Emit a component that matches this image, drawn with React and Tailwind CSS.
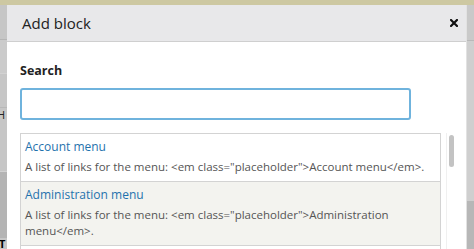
const BLOCKS = [
  {
    title: "Account menu",
    desc: 'A list of links for the menu: <em class="placeholder">Account menu</em>.',
    bg: "bg-white",
  },
  {
    title: "Administration menu",
    desc: 'A list of links for the menu: <em class="placeholder">Administration menu</em>.',
    bg: "bg-[#f3f3ef]",
  },
  {
    title: "Book navigation",
    desc: "Shows the book navigation.",
    bg: "bg-white",
  },
];

export default function App() {
  return (
    <div
      className="w-[474px] h-[249px] overflow-hidden flex flex-col bg-[#c4c4c4] text-[#333]"
      style={{ fontFamily: '"Open Sans", "Liberation Sans", sans-serif' }}
    >
      {/* page behind the overlay */}
      <div className="h-[5px] shrink-0 bg-[#cdc8a2]" />
      <div className="flex flex-1 min-h-0">
        <div className="w-[7px] shrink-0 bg-[#c6c6c6] flex flex-col overflow-hidden">
          <div className="h-[35px] shrink-0 border-b border-[#b5b5b5]" />
          <div className="h-[34px] shrink-0 border-b border-[#d2d2d2] bg-[#cbcbcb]" />
          <div className="h-[34px] shrink-0 border-b border-[#b8b8b8]" />
          <div className="h-[14px] shrink-0 text-[11px] leading-[14px] text-[#222] -ml-[3px]">H</div>
          <div className="h-[50px] shrink-0 border-b border-[#d2d2d2]" />
          <div className="h-[66px] shrink-0 bg-[#b4b4b4]" />
          <div className="text-[11px] leading-[12px] text-black font-bold -ml-[1px]">T</div>
        </div>

        {/* dialog */}
        <div className="flex-1 min-w-0 bg-white flex flex-col">
          <div className="h-[37px] shrink-0 bg-[#e8e8ea] border-b border-[#cfcfcf] flex items-center justify-between pl-[15px] pr-[7px]">
            <span className="text-[15px] text-[#222]">Add block</span>
            <svg width="8" height="8" viewBox="0 0 8 8" className="mr-[1px]">
              <path d="M1 1 L7 7 M7 1 L1 7" stroke="#111" strokeWidth="2.2" strokeLinecap="square" />
            </svg>
          </div>

          <div className="flex-1 min-h-0 pl-[13px] pr-[10px] pt-[20px]">
            <label className="block text-[12.5px] font-bold text-[#222] leading-[18px]">Search</label>
            <input
              className="mt-[8px] block w-[391px] h-[32px] rounded-[3px] border-2 border-[#6fb3dd] outline-none px-2 text-[12px]"
              type="text"
            />

            <div className="mt-[13px] flex gap-[5px]">
              <div className="w-[421px] border border-[#d3d3d3] border-b-0">
                {BLOCKS.map((b) => (
                  <div key={b.title} className={`${b.bg} border-b border-[#d3d3d3] pl-[4px] pr-[4px] pt-[5px] pb-[6px]`}>
                    <div className="text-[12px] leading-[16px] text-[#1f72ad] mb-[4px]">{b.title}</div>
                    <div className="text-[11.5px] leading-[16px] text-[#555]">{b.desc}</div>
                  </div>
                ))}
              </div>
              <div className="w-[10px] shrink-0 pt-[2px] flex justify-center border-l border-[#f0f0f0]">
                <div className="w-[5px] h-[32px] rounded-full bg-[#c3c3c3]" />
              </div>
            </div>
          </div>
        </div>

        <div className="w-[8px] shrink-0 bg-[#c9c9c9] border-l border-[#e2e2e2] flex flex-col">
          <div className="h-[36px] border-b border-[#b9b9b9]" />
          <div className="h-[160px] bg-[#cfcfcf]" />
          <div className="flex-1 bg-[#b7b7b7]" />
        </div>
      </div>
    </div>
  );
}
